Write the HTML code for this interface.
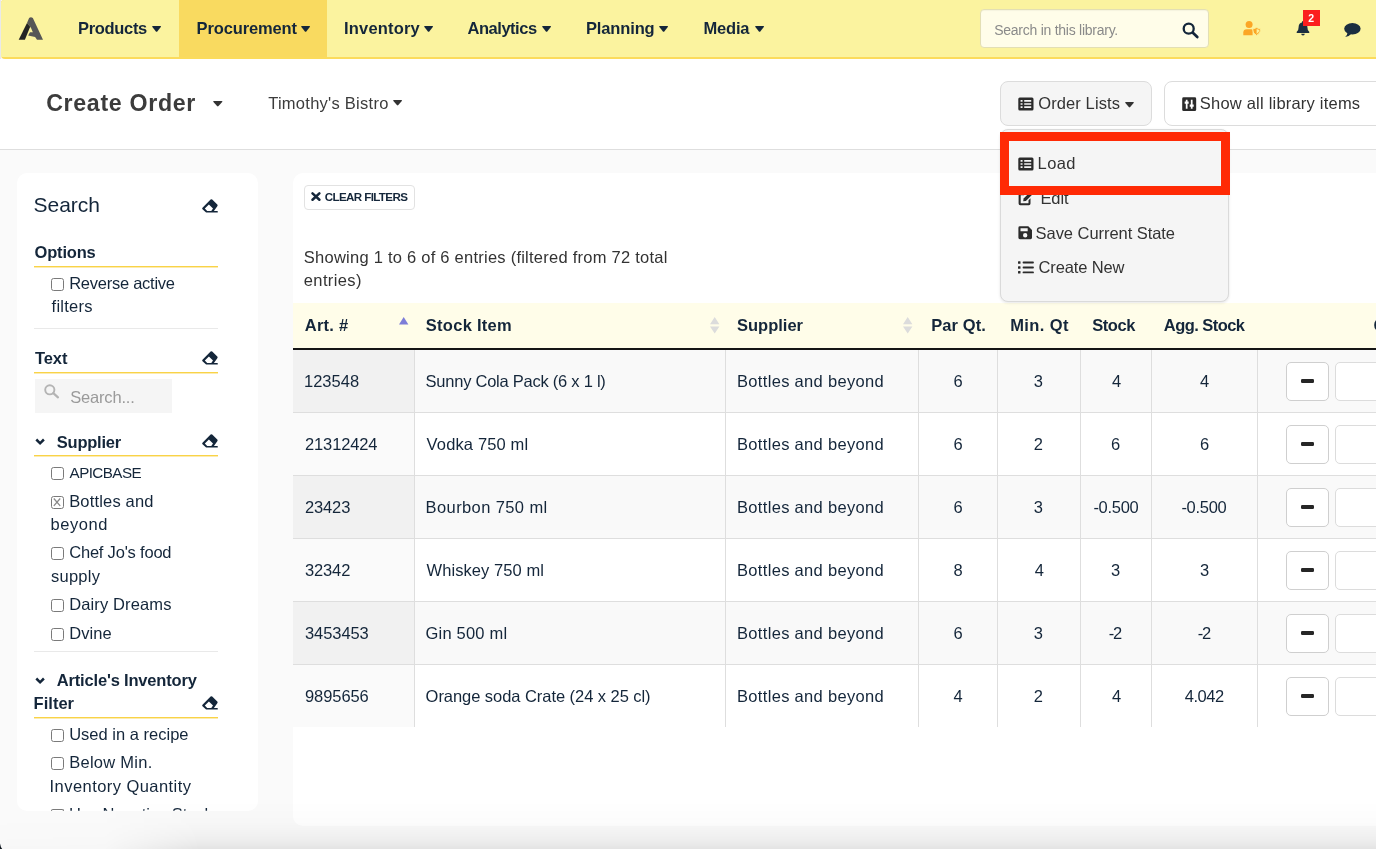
<!DOCTYPE html>
<html lang="en">
<head>
<meta charset="utf-8">
<title>Create Order</title>
<style>
*{box-sizing:border-box;margin:0;padding:0}
html,body{width:1376px;height:849px;overflow:hidden;background:#fafafa}
body{font-family:"Liberation Sans",sans-serif;color:#14263a;position:relative;font-size:16px}
.abs{position:absolute}
.t{position:absolute;white-space:nowrap;line-height:1;color:#14263a;z-index:5;opacity:.999}
svg{position:absolute;overflow:visible}
/* NAV */
#nav{position:absolute;left:1.3px;top:0;width:1376px;height:58.7px;background:#fbdb5c;border-radius:3px 0 0 4px}
#navact{position:absolute;left:179.3px;top:0;width:148.2px;height:56.7px;background:#f9da60}
.car{position:absolute;width:0;height:0;border-left:4.8px solid transparent;border-right:4.8px solid transparent;border-top:5.6px solid #14263a;z-index:5}
#srch{position:absolute;left:980.3px;top:9.3px;width:228.7px;height:38.4px;background:#fffde9;border:1px solid #e3dfb4;border-radius:4px;box-shadow:inset 0 1px 1px rgba(0,0,0,.04)}
/* HEADER */
#hdr{position:absolute;left:0;top:58.7px;width:1376px;height:91.3px;background:#fff;border-bottom:1px solid #dedede}
.btn{position:absolute;top:80.8px;height:45.2px;border:1px solid #dcdcdc;border-radius:8px}
/* DROPDOWN */
#dd{position:absolute;left:999.6px;top:128.7px;width:229.4px;height:173.5px;background:#f5f5f5;border:1px solid #dadada;border-radius:8px;box-shadow:0 1px 3px rgba(0,0,0,.10);z-index:3}
#red{position:absolute;left:1000px;top:132px;width:230px;height:62.5px;background:#ff2a05;z-index:8}
#redin{position:absolute;left:1009px;top:140.6px;width:212px;height:45.2px;background:#f5f5f5;z-index:8}
/* SIDEBAR */
#side{position:absolute;left:17.4px;top:173.3px;width:241px;height:637.5px;background:#fff;border-radius:10px}
.yl{position:absolute;left:34px;width:184px;height:2px;background:linear-gradient(to bottom,#f9d347 50%,#fcebb0 50%);z-index:4}
.gl{position:absolute;left:34.3px;width:184px;height:1px;background:#e9e9e9;z-index:4}
.cb{position:absolute;left:50.6px;width:13.4px;height:13.4px;border:1.1px solid #7a7a7a;border-radius:2.6px;background:#fff;z-index:4}
/* MAIN */
#main{position:absolute;left:293.3px;top:173.3px;width:1100px;height:653px;background:#fff;border-radius:10px}
#thead{position:absolute;left:293.3px;top:302.9px;width:1090px;height:45.6px;background:#fffde9}
#thline{position:absolute;left:293.3px;top:348.2px;width:1090px;height:1.7px;background:#151515}
.row{position:absolute;left:293.3px;width:1090px;height:62.2px}
.row.odd{background:#f9f9f9}
.row .c1{position:absolute;left:0;top:0;width:120.6px;height:100%;background:#fafafa}
.row.odd .c1{background:#f1f1f1}
.hl{position:absolute;left:293.3px;width:1090px;height:1.1px;background:#dedede}
.vl{position:absolute;top:349.9px;width:1.2px;height:377.6px;background:#dedede;z-index:2}
.mb{position:absolute;left:1286.4px;width:42.6px;height:39px;border:1px solid #cfcfcf;border-radius:5px;background:#fff;z-index:3}
.mb i{position:absolute;left:13.2px;top:16px;width:13.6px;height:4px;background:#262626;border-radius:1.2px}
.ib{position:absolute;left:1335px;width:60px;height:39px;border:1px solid #dcdcdc;border-radius:5px;background:#fff;z-index:3}
#shade{position:absolute;left:0;top:800px;width:1376px;height:49px;background:linear-gradient(to bottom,rgba(0,0,0,0) 0%,rgba(0,0,0,.012) 45%,rgba(0,0,0,.035) 72%,rgba(0,0,0,.06) 88%,rgba(0,0,0,.09) 100%);-webkit-mask-image:linear-gradient(to right,rgba(0,0,0,.12) 0,rgba(0,0,0,.15) 105px,#000 200px);mask-image:linear-gradient(to right,rgba(0,0,0,.12) 0,rgba(0,0,0,.15) 105px,#000 200px);z-index:20;pointer-events:none}
</style>
</head>
<body>
<div id="nav"></div>
<div class="abs" style="left:1.3px;top:0;width:1376px;height:56.8px;background:#fbf39f;border-radius:3px 0 0 0"></div>
<div id="navact"></div>
<div class="abs" style="left:0;top:0;width:1.3px;height:60px;background:#e9e9ea"></div>
<!-- logo -->
<svg style="left:18px;top:16px" width="26" height="25" viewBox="0 0 26 25"><path d="M11.1 1.9 Q12.9 0.4 14.85 1.9 L25.0 23.7 L19.0 23.7 L17.1 20.9 L10.1 19.6 L12.0 16.35 L14.85 16.35 L13.15 12.2 L12.2 10.7 L9.0 6.9 Z" fill="#565656"/><path d="M9.0 6.9 L12.2 10.7 L6.9 23.7 L0.7 23.7 Z" fill="#242424"/></svg>
<!-- nav carets -->
<svg style="left:151.9px;top:26.1px;z-index:5" width="9.2" height="5.9" viewBox="0 0 9.2 5.8" preserveAspectRatio="none"><path d="M0.9 0 H8.3 Q9.6 0.1 8.8 1.1 L5.3 5.3 Q4.6 6 3.9 5.3 L0.4 1.1 Q-0.4 0.1 0.9 0 Z" fill="#14263a"/></svg>
<svg style="left:301.1px;top:26.1px;z-index:5" width="9.2" height="5.9" viewBox="0 0 9.2 5.8" preserveAspectRatio="none"><path d="M0.9 0 H8.3 Q9.6 0.1 8.8 1.1 L5.3 5.3 Q4.6 6 3.9 5.3 L0.4 1.1 Q-0.4 0.1 0.9 0 Z" fill="#14263a"/></svg>
<svg style="left:423.5px;top:26.1px;z-index:5" width="9.2" height="5.9" viewBox="0 0 9.2 5.8" preserveAspectRatio="none"><path d="M0.9 0 H8.3 Q9.6 0.1 8.8 1.1 L5.3 5.3 Q4.6 6 3.9 5.3 L0.4 1.1 Q-0.4 0.1 0.9 0 Z" fill="#14263a"/></svg>
<svg style="left:542.1px;top:26.1px;z-index:5" width="9.2" height="5.9" viewBox="0 0 9.2 5.8" preserveAspectRatio="none"><path d="M0.9 0 H8.3 Q9.6 0.1 8.8 1.1 L5.3 5.3 Q4.6 6 3.9 5.3 L0.4 1.1 Q-0.4 0.1 0.9 0 Z" fill="#14263a"/></svg>
<svg style="left:658.5px;top:26.1px;z-index:5" width="9.2" height="5.9" viewBox="0 0 9.2 5.8" preserveAspectRatio="none"><path d="M0.9 0 H8.3 Q9.6 0.1 8.8 1.1 L5.3 5.3 Q4.6 6 3.9 5.3 L0.4 1.1 Q-0.4 0.1 0.9 0 Z" fill="#14263a"/></svg>
<svg style="left:755.1px;top:26.1px;z-index:5" width="9.2" height="5.9" viewBox="0 0 9.2 5.8" preserveAspectRatio="none"><path d="M0.9 0 H8.3 Q9.6 0.1 8.8 1.1 L5.3 5.3 Q4.6 6 3.9 5.3 L0.4 1.1 Q-0.4 0.1 0.9 0 Z" fill="#14263a"/></svg>
<div id="srch"></div>
<svg style="left:1181.5px;top:22.4px" width="17" height="16" viewBox="0 0 17 16"><circle cx="6.7" cy="6.7" r="5" fill="none" stroke="#14263a" stroke-width="2.3"/><path d="M10.6 10.6 L15.3 15.1" stroke="#14263a" stroke-width="2.7" stroke-linecap="round"/></svg>
<!-- user shield -->
<svg style="left:1243.4px;top:20.8px" width="18" height="15" viewBox="0 0 18 15"><circle cx="6.1" cy="3.6" r="3.5" fill="#fba626"/><path d="M0.3 14.2 V11.6 Q0.3 8.2 3.8 8.2 H8.4 Q9.6 8.2 9.6 9.2 V14.2 Z" fill="#fba626"/><path d="M13.6 6.6 L17.6 8.1 Q17.6 12.6 13.6 14.4 Q9.6 12.6 9.6 8.1 Z" fill="#fba626" stroke="#fbf39f" stroke-width="0.9"/><path d="M13.6 8 V13 Q16.3 11.5 16.4 8.9 Z" fill="#fbf39f"/></svg>
<!-- bell -->
<svg style="left:1295.5px;top:21.3px" width="14" height="15" viewBox="0 0 14 15"><path d="M7 0 Q8 0 8 1 V1.5 Q11.4 2.3 11.4 6.3 Q11.4 9.3 13 10.6 Q13.6 11.2 13.3 11.7 Q13.1 12.1 12.5 12.1 H1.5 Q0.9 12.1 0.7 11.7 Q0.4 11.2 1 10.6 Q2.6 9.3 2.6 6.3 Q2.6 2.3 6 1.5 V1 Q6 0 7 0 Z" fill="#1b2e40"/><path d="M5.2 12.8 H8.8 Q8.8 14.6 7 14.6 Q5.2 14.6 5.2 12.8 Z" fill="#1b2e40"/></svg>
<div class="abs" style="left:1302.8px;top:9.6px;width:17px;height:16.5px;background:#fb1e1e;z-index:6"></div>
<span class="t" style="left:1308.2px;top:12.6px;font-size:10.5px;font-weight:bold;color:#fff;z-index:7">2</span>
<!-- chat -->
<svg style="left:1343.5px;top:22.6px" width="17" height="15" viewBox="0 0 17 15"><ellipse cx="8.4" cy="5.8" rx="8.2" ry="5.7" fill="#1b2e40"/><path d="M3.6 9.2 Q3.4 12.2 1.2 14 Q5 13.8 7.4 10.8 Z" fill="#1b2e40"/></svg>

<div id="hdr"></div>
<svg style="left:212.7px;top:101.0px;z-index:5" width="9.6" height="5.6" viewBox="0 0 9.2 5.8" preserveAspectRatio="none"><path d="M0.9 0 H8.3 Q9.6 0.1 8.8 1.1 L5.3 5.3 Q4.6 6 3.9 5.3 L0.4 1.1 Q-0.4 0.1 0.9 0 Z" fill="#333"/></svg>
<svg style="left:392.9px;top:100.4px;z-index:5" width="9.2" height="5.6" viewBox="0 0 9.2 5.8" preserveAspectRatio="none"><path d="M0.9 0 H8.3 Q9.6 0.1 8.8 1.1 L5.3 5.3 Q4.6 6 3.9 5.3 L0.4 1.1 Q-0.4 0.1 0.9 0 Z" fill="#333"/></svg>
<div class="btn" style="left:999.8px;width:152.2px;background:#f5f5f5"></div>
<div class="btn" style="left:1163.7px;width:240px;background:#fff"></div>
<svg style="left:1124.7px;top:102.2px;z-index:5" width="9.0" height="5.6" viewBox="0 0 9.2 5.8" preserveAspectRatio="none"><path d="M0.9 0 H8.3 Q9.6 0.1 8.8 1.1 L5.3 5.3 Q4.6 6 3.9 5.3 L0.4 1.1 Q-0.4 0.1 0.9 0 Z" fill="#333"/></svg>
<!-- order lists icon -->
<svg style="left:1017.9px;top:97px" width="15.8" height="14" viewBox="0 0 16 14" preserveAspectRatio="none"><path d="M1.8 0.4 H14.2 Q15.7 0.4 15.7 1.9 V12.1 Q15.7 13.6 14.2 13.6 H1.8 Q0.3 13.6 0.3 12.1 V1.9 Q0.3 0.4 1.8 0.4 Z M2.6 3.1 V4.8 H4.6 V3.1 Z M6.3 3.1 V4.8 H13.4 V3.1 Z M2.6 6.15 V7.85 H4.6 V6.15 Z M6.3 6.15 V7.85 H13.4 V6.15 Z M2.6 9.3 V11 H4.6 V9.3 Z M6.3 9.3 V11 H13.4 V9.3 Z" fill="#2b2b2b" fill-rule="evenodd"/></svg>
<!-- sliders icon -->
<svg style="left:1181.6px;top:96.8px" width="14.4" height="14.4" viewBox="0 0 14 14"><path d="M1.6 0.3 H12.4 Q13.8 0.3 13.8 1.7 V12.3 Q13.8 13.7 12.4 13.7 H1.6 Q0.2 13.7 0.2 12.3 V1.7 Q0.2 0.3 1.6 0.3 Z M3.7 2.6 V4.4 H2.6 V6.6 H3.7 V11.4 H5.4 V6.6 H6.5 V4.4 H5.4 V2.6 Z M8.6 2.6 V7.4 H7.5 V9.6 H8.6 V11.4 H10.3 V9.6 H11.4 V7.4 H10.3 V2.6 Z" fill="#2b2b2b" fill-rule="evenodd"/></svg>

<!-- SIDEBAR -->
<div id="side"></div>
<svg style="left:202.2px;top:199.2px;z-index:4" width="16" height="13.7" viewBox="0 0 16 13.7"><path d="M8.6 0.6 Q9.4 -0.2 10.2 0.6 L15.3 5.6 Q16.1 6.4 15.3 7.3 L11.9 11.9 H15.1 Q15.9 11.9 15.9 12.7 Q15.9 13.6 15.1 13.6 H4.9 Q4.3 13.6 3.8 13.2 L0.5 10.3 Q-0.3 9.5 0.5 8.7 Z M6.9 5.5 L2.8 9.5 L5.2 11.9 H9.3 L11.0 9.4 Z" fill="#14263a" fill-rule="evenodd"/></svg>
<svg style="left:202.2px;top:350.6px;z-index:4" width="16" height="13.7" viewBox="0 0 16 13.7"><path d="M8.6 0.6 Q9.4 -0.2 10.2 0.6 L15.3 5.6 Q16.1 6.4 15.3 7.3 L11.9 11.9 H15.1 Q15.9 11.9 15.9 12.7 Q15.9 13.6 15.1 13.6 H4.9 Q4.3 13.6 3.8 13.2 L0.5 10.3 Q-0.3 9.5 0.5 8.7 Z M6.9 5.5 L2.8 9.5 L5.2 11.9 H9.3 L11.0 9.4 Z" fill="#14263a" fill-rule="evenodd"/></svg>
<svg style="left:202.2px;top:434.2px;z-index:4" width="16" height="13.7" viewBox="0 0 16 13.7"><path d="M8.6 0.6 Q9.4 -0.2 10.2 0.6 L15.3 5.6 Q16.1 6.4 15.3 7.3 L11.9 11.9 H15.1 Q15.9 11.9 15.9 12.7 Q15.9 13.6 15.1 13.6 H4.9 Q4.3 13.6 3.8 13.2 L0.5 10.3 Q-0.3 9.5 0.5 8.7 Z M6.9 5.5 L2.8 9.5 L5.2 11.9 H9.3 L11.0 9.4 Z" fill="#14263a" fill-rule="evenodd"/></svg>
<svg style="left:202.2px;top:696.3px;z-index:4" width="16" height="13.7" viewBox="0 0 16 13.7"><path d="M8.6 0.6 Q9.4 -0.2 10.2 0.6 L15.3 5.6 Q16.1 6.4 15.3 7.3 L11.9 11.9 H15.1 Q15.9 11.9 15.9 12.7 Q15.9 13.6 15.1 13.6 H4.9 Q4.3 13.6 3.8 13.2 L0.5 10.3 Q-0.3 9.5 0.5 8.7 Z M6.9 5.5 L2.8 9.5 L5.2 11.9 H9.3 L11.0 9.4 Z" fill="#14263a" fill-rule="evenodd"/></svg>
<div class="yl" style="top:266px"></div>
<div class="yl" style="top:372px"></div>
<div class="yl" style="top:455px"></div>
<div class="yl" style="top:717px"></div>
<div class="gl" style="top:328px"></div>
<div class="gl" style="top:651px"></div>
<div class="cb" style="top:277.7px"></div>
<div class="cb" style="top:467.0px"></div>
<div class="cb" style="top:495.5px"></div>
<div class="cb" style="top:547.0px"></div>
<div class="cb" style="top:599.1px"></div>
<div class="cb" style="top:627.6px"></div>
<div class="cb" style="top:728.7px"></div>
<div class="cb" style="top:757.0px"></div>
<div class="cb" style="top:808.7px;height:2.1px;border-bottom:none;border-radius:2.6px 2.6px 0 0"></div>
<svg style="left:53.4px;top:498.4px;z-index:5" width="8" height="8.4" viewBox="0 0 8 8.4"><path d="M0.8 0.5 L7.2 7.9 M7.2 0.5 L0.8 7.9" stroke="#8a8a8a" stroke-width="1.3"/></svg>
<div class="abs" style="left:35px;top:379px;width:137px;height:34px;background:#f5f5f5"></div>
<svg style="left:44px;top:383.5px;z-index:4" width="15.2" height="14.4" viewBox="0 0 15.2 14.4"><circle cx="5.8" cy="5.8" r="4.6" fill="none" stroke="#b4b4b4" stroke-width="1.9"/><path d="M9.3 9.2 L14 13.4" stroke="#b4b4b4" stroke-width="2.2" stroke-linecap="round"/></svg>
<svg style="left:34.7px;top:438.0px;z-index:4" width="10.2" height="7.6" viewBox="0 0 10.2 7.6"><path d="M1.3 1.5 L5.1 5.3 L8.9 1.5" fill="none" stroke="#14263a" stroke-width="2.5" stroke-linecap="butt" stroke-linejoin="miter"/></svg>
<svg style="left:34.7px;top:676.6px;z-index:4" width="10.2" height="7.6" viewBox="0 0 10.2 7.6"><path d="M1.3 1.5 L5.1 5.3 L8.9 1.5" fill="none" stroke="#14263a" stroke-width="2.5" stroke-linecap="butt" stroke-linejoin="miter"/></svg>
<!-- MAIN -->
<div id="main"></div>
<div class="abs" style="left:304.2px;top:185px;width:110.4px;height:25px;border:1px solid #e2e2e2;border-radius:4px;background:#fff"></div>
<svg style="left:310.9px;top:192.2px" width="9.9" height="9.2" viewBox="0 0 9.9 9.2"><path d="M1.5 1.4 L8.4 7.8 M8.4 1.4 L1.5 7.8" stroke="#14263a" stroke-width="2.5" stroke-linecap="round"/></svg>
<div id="thead"></div>
<div id="thline"></div>
<div class="row odd" style="top:349.9px"><div class="c1"></div></div>
<div class="hl" style="top:412.0px"></div>
<div class="mb" style="top:361.5px"><i></i></div><div class="ib" style="top:361.5px"></div>
<div class="row" style="top:412.9px"><div class="c1"></div></div>
<div class="hl" style="top:475.0px"></div>
<div class="mb" style="top:424.5px"><i></i></div><div class="ib" style="top:424.5px"></div>
<div class="row odd" style="top:475.9px"><div class="c1"></div></div>
<div class="hl" style="top:538.0px"></div>
<div class="mb" style="top:487.5px"><i></i></div><div class="ib" style="top:487.5px"></div>
<div class="row" style="top:538.9px"><div class="c1"></div></div>
<div class="hl" style="top:601.0px"></div>
<div class="mb" style="top:550.5px"><i></i></div><div class="ib" style="top:550.5px"></div>
<div class="row odd" style="top:601.9px"><div class="c1"></div></div>
<div class="hl" style="top:664.0px"></div>
<div class="mb" style="top:613.5px"><i></i></div><div class="ib" style="top:613.5px"></div>
<div class="row" style="top:664.9px"><div class="c1"></div></div>
<div class="mb" style="top:676.5px"><i></i></div><div class="ib" style="top:676.5px"></div>
<div class="vl" style="left:413.7px"></div>
<div class="vl" style="left:725.1px"></div>
<div class="vl" style="left:917.8px"></div>
<div class="vl" style="left:996.9px"></div>
<div class="vl" style="left:1080px"></div>
<div class="vl" style="left:1151.1px"></div>
<div class="vl" style="left:1256.9px"></div>
<svg style="left:399.1px;top:317.4px" width="9.4" height="7.4" viewBox="0 0 9.4 7.4"><path d="M4.7 0 L9.4 7.4 H0 Z" fill="#7d7dd8"/></svg>
<svg style="left:710.4px;top:316.9px" width="9.4" height="16.6" viewBox="0 0 9.4 16.6"><path d="M4.7 0 L9.4 7.2 H0 Z M4.7 16.6 L9.4 9.4 H0 Z" fill="#dcdcdc"/></svg>
<svg style="left:903.0px;top:316.9px" width="9.4" height="16.6" viewBox="0 0 9.4 16.6"><path d="M4.7 0 L9.4 7.2 H0 Z M4.7 16.6 L9.4 9.4 H0 Z" fill="#dcdcdc"/></svg>
<span class="t" style="left:1373.6px;top:317.4px;font-size:16.5px;font-weight:bold">O</span>
<!-- dropdown -->
<div id="dd"></div>
<svg style="left:1017.8px;top:156.8px;z-index:9" width="15.8" height="14" viewBox="0 0 16 14" preserveAspectRatio="none"><path d="M1.8 0.4 H14.2 Q15.7 0.4 15.7 1.9 V12.1 Q15.7 13.6 14.2 13.6 H1.8 Q0.3 13.6 0.3 12.1 V1.9 Q0.3 0.4 1.8 0.4 Z M2.6 3.1 V4.8 H4.6 V3.1 Z M6.3 3.1 V4.8 H13.4 V3.1 Z M2.6 6.15 V7.85 H4.6 V6.15 Z M6.3 6.15 V7.85 H13.4 V6.15 Z M2.6 9.3 V11 H4.6 V9.3 Z M6.3 9.3 V11 H13.4 V9.3 Z" fill="#2b2b2b" fill-rule="evenodd"/></svg>
<svg style="left:1016.9px;top:190.3px;z-index:6" width="17" height="16.4" viewBox="0 0 17 16"><path d="M3.2 3 H8.8 L6.9 5 H3.7 V13 H11.5 V10 L13.5 8 V13.4 Q13.5 15 11.9 15 H3.2 Q1.6 15 1.6 13.4 V4.6 Q1.6 3 3.2 3 Z" fill="#2b2b2b"/><path d="M6.6 8.4 L12.6 2.4 L14.9 4.7 L8.9 10.7 L6.2 11.1 Z" fill="#2b2b2b"/><path d="M13.4 1.6 L14.2 0.8 Q14.8 0.3 15.4 0.8 L16.4 1.8 Q16.9 2.4 16.4 3 L15.6 3.8 Z" fill="#2b2b2b"/></svg>
<svg style="left:1017.6px;top:226.2px;z-index:6" width="14.4" height="13.4" viewBox="0 0 14 13.4"><path d="M1.7 0.2 H10.1 L13.8 3.9 V11.7 Q13.8 13.2 12.3 13.2 H1.7 Q0.2 13.2 0.2 11.7 V1.7 Q0.2 0.2 1.7 0.2 Z M2.3 2.2 V5.2 H9.5 V2.2 Z M7 7 A2.2 2.2 0 1 0 7 11.4 A2.2 2.2 0 1 0 7 7 Z" fill="#2b2b2b" fill-rule="evenodd"/></svg>
<svg style="left:1017.6px;top:260.6px;z-index:6" width="16" height="13" viewBox="0 0 16 13"><rect x="0" y="0.3" width="2.5" height="2.5" rx=".5" fill="#2b2b2b"/><rect x="0" y="5.2" width="2.5" height="2.5" rx=".5" fill="#2b2b2b"/><rect x="0" y="10.1" width="2.5" height="2.5" rx=".5" fill="#2b2b2b"/><rect x="4.6" y="0.6" width="11.3" height="1.9" rx=".9" fill="#2b2b2b"/><rect x="4.6" y="5.5" width="11.3" height="1.9" rx=".9" fill="#2b2b2b"/><rect x="4.6" y="10.4" width="11.3" height="1.9" rx=".9" fill="#2b2b2b"/></svg>
<div id="red"></div><div id="redin"></div>
<span class="t" id="n0" style="left:78.00px;top:20.28px;font-size:16.5px;letter-spacing:-0.321px;font-weight:bold">Products</span>
<span class="t" id="n1" style="left:196.50px;top:20.28px;font-size:16.5px;letter-spacing:-0.125px;font-weight:bold">Procurement</span>
<span class="t" id="n2" style="left:344.00px;top:20.28px;font-size:16.5px;letter-spacing:0.188px;font-weight:bold">Inventory</span>
<span class="t" id="n3" style="left:467.50px;top:20.28px;font-size:16.5px;letter-spacing:-0.469px;font-weight:bold">Analytics</span>
<span class="t" id="n4" style="left:586.00px;top:20.28px;font-size:16.5px;letter-spacing:-0.143px;font-weight:bold">Planning</span>
<span class="t" id="n5" style="left:703.50px;top:20.28px;font-size:16.5px;letter-spacing:-0.188px;font-weight:bold">Media</span>
<span class="t" id="ns" style="left:994.20px;top:22.65px;font-size:14px;letter-spacing:-0.255px;color:#8a8a8a">Search in this library.</span>
<span class="t" id="h1" style="left:46.20px;top:91.86px;font-size:23.2px;letter-spacing:0.673px;font-weight:bold;color:#3c3c3c">Create Order</span>
<span class="t" id="h2" style="left:268.20px;top:94.53px;font-size:16.5px;letter-spacing:0.260px;color:#3c3c3c">Timothy's Bistro</span>
<span class="t" id="b1" style="left:1038.20px;top:95.43px;font-size:16.5px;letter-spacing:0.110px;color:#333">Order Lists</span>
<span class="t" id="b2" style="left:1199.80px;top:95.43px;font-size:16.5px;letter-spacing:0.210px;color:#333">Show all library items</span>
<span class="t" id="d1" style="left:1037.60px;top:155.43px;font-size:16.5px;letter-spacing:0.400px;color:#333;z-index:9">Load</span>
<span class="t" id="d2" style="left:1040.40px;top:190.03px;font-size:16.5px;letter-spacing:-0.050px;color:#333">Edit</span>
<span class="t" id="d3" style="left:1035.60px;top:224.63px;font-size:16.5px;letter-spacing:-0.053px;color:#333">Save Current State</span>
<span class="t" id="d4" style="left:1038.60px;top:258.93px;font-size:16.5px;letter-spacing:-0.144px;color:#333">Create New</span>
<span class="t" id="m1" style="left:324.80px;top:191.38px;font-size:11.6px;letter-spacing:-0.625px;font-weight:bold">CLEAR FILTERS</span>
<span class="t" id="m2" style="left:303.80px;top:248.83px;font-size:16.5px;letter-spacing:0.246px;color:#333">Showing 1 to 6 of 6 entries (filtered from 72 total</span>
<span class="t" id="m3" style="left:303.80px;top:271.63px;font-size:16.5px;letter-spacing:0.371px;color:#333">entries)</span>
<span class="t" id="th0" style="left:304.80px;top:317.43px;font-size:16.5px;letter-spacing:0.240px;font-weight:bold">Art. #</span>
<span class="t" id="th1" style="left:425.80px;top:317.43px;font-size:16.5px;letter-spacing:0.278px;font-weight:bold">Stock Item</span>
<span class="t" id="th2" style="left:737.00px;top:317.43px;font-size:16.5px;letter-spacing:0.000px;font-weight:bold">Supplier</span>
<span class="t" id="th3" style="left:931.20px;top:317.43px;font-size:16.5px;letter-spacing:0.100px;font-weight:bold">Par Qt.</span>
<span class="t" id="th4" style="left:1010.20px;top:317.43px;font-size:16.5px;letter-spacing:0.400px;font-weight:bold">Min. Qt</span>
<span class="t" id="th5" style="left:1092.20px;top:317.43px;font-size:16.5px;letter-spacing:-0.450px;font-weight:bold">Stock</span>
<span class="t" id="th6" style="left:1163.80px;top:317.43px;font-size:16.5px;letter-spacing:-0.556px;font-weight:bold">Agg. Stock</span>
<span class="t" id="r0a" style="left:304.00px;top:372.63px;font-size:16.5px;letter-spacing:0.000px">123548</span>
<span class="t" id="r0b" style="left:425.60px;top:372.63px;font-size:16.5px;letter-spacing:-0.246px">Sunny Cola Pack (6 x 1 l)</span>
<span class="t" id="r0c" style="left:737.00px;top:372.63px;font-size:16.5px;letter-spacing:0.324px">Bottles and beyond</span>
<span class="t" id="r0n0" style="left:953.45px;top:372.63px;font-size:16.5px;letter-spacing:0.000px">6</span>
<span class="t" id="r0n1" style="left:1033.85px;top:372.63px;font-size:16.5px;letter-spacing:0.000px">3</span>
<span class="t" id="r0n2" style="left:1112.05px;top:372.63px;font-size:16.5px;letter-spacing:0.000px">4</span>
<span class="t" id="r0n3" style="left:1200.05px;top:372.63px;font-size:16.5px;letter-spacing:0.000px">4</span>
<span class="t" id="r1a" style="left:305.00px;top:435.63px;font-size:16.5px;letter-spacing:-0.129px">21312424</span>
<span class="t" id="r1b" style="left:426.60px;top:435.63px;font-size:16.5px;letter-spacing:0.145px">Vodka 750 ml</span>
<span class="t" id="r1c" style="left:737.00px;top:435.63px;font-size:16.5px;letter-spacing:0.324px">Bottles and beyond</span>
<span class="t" id="r1n0" style="left:953.45px;top:435.63px;font-size:16.5px;letter-spacing:0.000px">6</span>
<span class="t" id="r1n1" style="left:1033.85px;top:435.63px;font-size:16.5px;letter-spacing:0.000px">2</span>
<span class="t" id="r1n2" style="left:1111.05px;top:435.63px;font-size:16.5px;letter-spacing:0.000px">6</span>
<span class="t" id="r1n3" style="left:1200.05px;top:435.63px;font-size:16.5px;letter-spacing:0.000px">6</span>
<span class="t" id="r2a" style="left:305.00px;top:498.63px;font-size:16.5px;letter-spacing:-0.137px">23423</span>
<span class="t" id="r2b" style="left:425.60px;top:498.63px;font-size:16.5px;letter-spacing:0.392px">Bourbon 750 ml</span>
<span class="t" id="r2c" style="left:737.00px;top:498.63px;font-size:16.5px;letter-spacing:0.324px">Bottles and beyond</span>
<span class="t" id="r2n0" style="left:953.45px;top:498.63px;font-size:16.5px;letter-spacing:0.000px">6</span>
<span class="t" id="r2n1" style="left:1033.85px;top:498.63px;font-size:16.5px;letter-spacing:0.000px">3</span>
<span class="t" id="r2n2" style="left:1093.40px;top:498.63px;font-size:16.5px;letter-spacing:-0.280px">-0.500</span>
<span class="t" id="r2n3" style="left:1181.40px;top:498.63px;font-size:16.5px;letter-spacing:-0.280px">-0.500</span>
<span class="t" id="r3a" style="left:305.00px;top:561.63px;font-size:16.5px;letter-spacing:-0.137px">32342</span>
<span class="t" id="r3b" style="left:426.60px;top:561.63px;font-size:16.5px;letter-spacing:0.069px">Whiskey 750 ml</span>
<span class="t" id="r3c" style="left:737.00px;top:561.63px;font-size:16.5px;letter-spacing:0.324px">Bottles and beyond</span>
<span class="t" id="r3n0" style="left:953.45px;top:561.63px;font-size:16.5px;letter-spacing:0.000px">8</span>
<span class="t" id="r3n1" style="left:1034.85px;top:561.63px;font-size:16.5px;letter-spacing:0.000px">4</span>
<span class="t" id="r3n2" style="left:1111.05px;top:561.63px;font-size:16.5px;letter-spacing:0.000px">3</span>
<span class="t" id="r3n3" style="left:1200.05px;top:561.63px;font-size:16.5px;letter-spacing:0.000px">3</span>
<span class="t" id="r4a" style="left:305.00px;top:624.63px;font-size:16.5px;letter-spacing:-0.075px">3453453</span>
<span class="t" id="r4b" style="left:425.60px;top:624.63px;font-size:16.5px;letter-spacing:0.189px">Gin 500 ml</span>
<span class="t" id="r4c" style="left:737.00px;top:624.63px;font-size:16.5px;letter-spacing:0.324px">Bottles and beyond</span>
<span class="t" id="r4n0" style="left:953.45px;top:624.63px;font-size:16.5px;letter-spacing:0.000px">6</span>
<span class="t" id="r4n1" style="left:1033.85px;top:624.63px;font-size:16.5px;letter-spacing:0.000px">3</span>
<span class="t" id="r4n2" style="left:1108.70px;top:624.63px;font-size:16.5px;letter-spacing:-1.300px">-2</span>
<span class="t" id="r4n3" style="left:1197.70px;top:624.63px;font-size:16.5px;letter-spacing:-1.300px">-2</span>
<span class="t" id="r5a" style="left:305.00px;top:687.63px;font-size:16.5px;letter-spacing:-0.075px">9895656</span>
<span class="t" id="r5b" style="left:425.60px;top:687.63px;font-size:16.5px;letter-spacing:-0.052px">Orange soda Crate (24 x 25 cl)</span>
<span class="t" id="r5c" style="left:737.00px;top:687.63px;font-size:16.5px;letter-spacing:0.324px">Bottles and beyond</span>
<span class="t" id="r5n0" style="left:953.45px;top:687.63px;font-size:16.5px;letter-spacing:0.000px">4</span>
<span class="t" id="r5n1" style="left:1033.85px;top:687.63px;font-size:16.5px;letter-spacing:0.000px">2</span>
<span class="t" id="r5n2" style="left:1112.05px;top:687.63px;font-size:16.5px;letter-spacing:0.000px">4</span>
<span class="t" id="r5n3" style="left:1184.75px;top:687.63px;font-size:16.5px;letter-spacing:-0.487px">4.042</span>
<span class="t" id="s0" style="left:33.60px;top:194.22px;font-size:21px;letter-spacing:-0.040px">Search</span>
<span class="t" id="s1" style="left:34.60px;top:244.03px;font-size:16.5px;letter-spacing:-0.200px;font-weight:bold">Options</span>
<span class="t" id="s2" style="left:69.20px;top:275.03px;font-size:16.5px;letter-spacing:-0.254px">Reverse active</span>
<span class="t" id="s3" style="left:51.60px;top:298.03px;font-size:16.5px;letter-spacing:0.250px">filters</span>
<span class="t" id="s4" style="left:35.00px;top:349.93px;font-size:16.5px;letter-spacing:-0.100px;font-weight:bold">Text</span>
<span class="t" id="s5" style="left:70.20px;top:388.73px;font-size:16.5px;letter-spacing:-0.175px;color:#9a9a9a">Search...</span>
<span class="t" id="s6" style="left:56.80px;top:433.53px;font-size:16.5px;letter-spacing:-0.243px;font-weight:bold">Supplier</span>
<span class="t" id="s7" style="left:69.60px;top:465.43px;font-size:15.2px;letter-spacing:-0.571px">APICBASE</span>
<span class="t" id="s8" style="left:69.20px;top:492.83px;font-size:16.5px;letter-spacing:0.170px">Bottles and</span>
<span class="t" id="s9" style="left:50.60px;top:516.03px;font-size:16.5px;letter-spacing:0.540px">beyond</span>
<span class="t" id="s10" style="left:69.20px;top:544.33px;font-size:16.5px;letter-spacing:-0.200px">Chef Jo's food</span>
<span class="t" id="s11" style="left:51.00px;top:567.63px;font-size:16.5px;letter-spacing:0.240px">supply</span>
<span class="t" id="s12" style="left:69.20px;top:596.43px;font-size:16.5px;letter-spacing:0.127px">Dairy Dreams</span>
<span class="t" id="s13" style="left:69.20px;top:624.93px;font-size:16.5px;letter-spacing:0.100px">Dvine</span>
<span class="t" id="s14" style="left:56.80px;top:671.93px;font-size:16.5px;letter-spacing:-0.178px;font-weight:bold">Article's Inventory</span>
<span class="t" id="s15" style="left:33.60px;top:694.73px;font-size:16.5px;letter-spacing:0.020px;font-weight:bold">Filter</span>
<span class="t" id="s16" style="left:69.20px;top:726.03px;font-size:16.5px;letter-spacing:0.007px">Used in a recipe</span>
<span class="t" id="s17" style="left:69.20px;top:754.33px;font-size:16.5px;letter-spacing:0.267px">Below Min.</span>
<span class="t" id="s18" style="left:49.60px;top:777.63px;font-size:16.5px;letter-spacing:0.441px">Inventory Quantity</span>
<span class="t" id="s19" style="left:68.90px;top:806.03px;font-size:16.5px;letter-spacing:-0.060px;clip-path:inset(0 0 11.7px 0)">Has Negative Stock</span>
<div id="shade"></div>
<svg style="left:0;top:843px;z-index:21" width="3.4" height="6" viewBox="0 0 4 7"><path d="M0 0.5 Q0.6 4.5 2.6 7 H0 Z" fill="#101820"/></svg>
</body>
</html>
